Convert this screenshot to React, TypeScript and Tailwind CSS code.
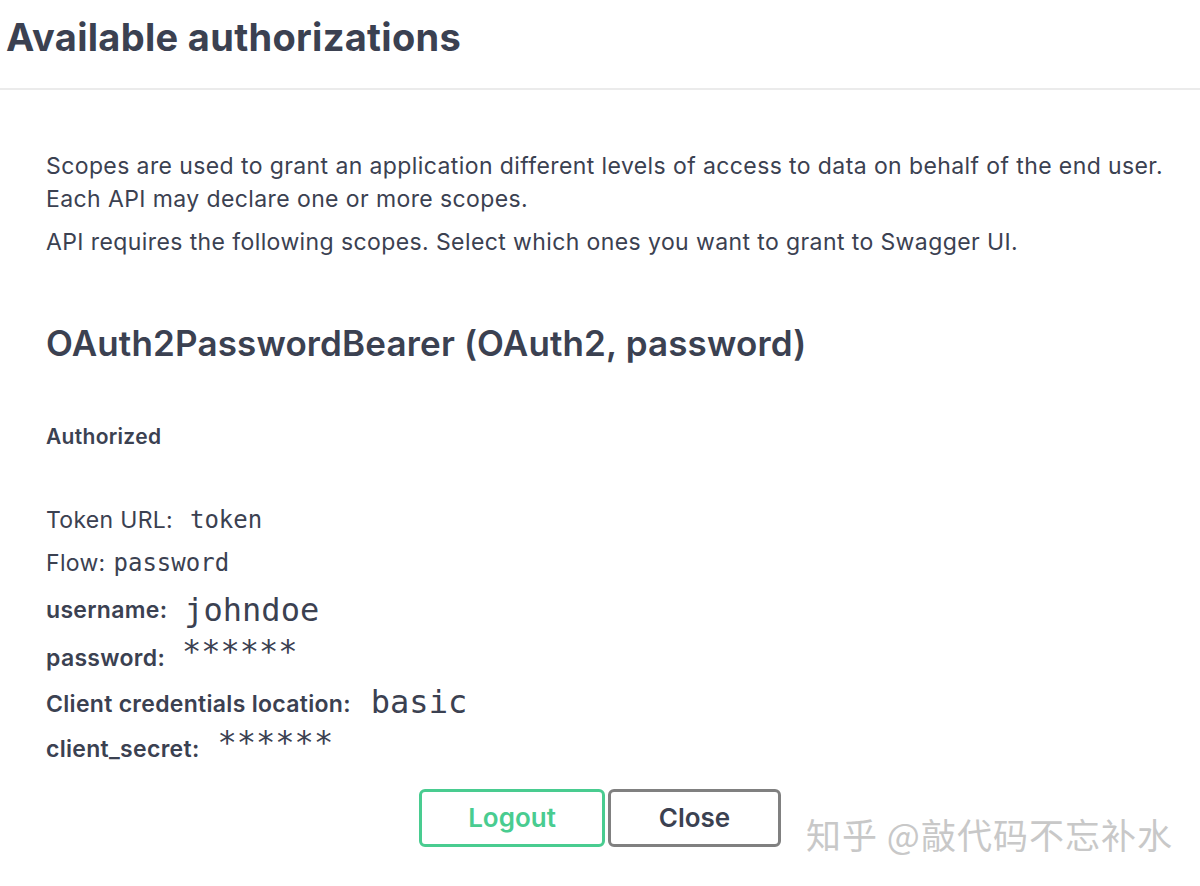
const sans = "font-['Inter','Liberation_Sans',sans-serif]";
const mono = "font-['DejaVu_Sans_Mono',monospace]";

const App = () => {
    return (
        <div className={`w-[1200px] h-[886px] bg-white text-[#3b4151] ${sans} overflow-hidden`}>
            <div className="h-[90px] border-b-2 border-[#ebebeb] flex items-center pl-[6px] pb-[14px]">
                <h2 className="text-[38px] font-bold leading-none tracking-[0.3px]">Available authorizations</h2>
            </div>

            <div className="pl-[46px] pr-[10px] pt-[60px]">
                <p className="text-[23px] leading-[33px] tracking-[0.4px] whitespace-nowrap">
                    Scopes are used to grant an application different levels of access to data on behalf of the end user.
                    <br />
                    Each API may declare one or more scopes.
                </p>
                <p className="text-[23px] leading-[33px] mt-[10px] tracking-[0.4px]">
                    API requires the following scopes. Select which ones you want to grant to Swagger UI.
                </p>

                <h4 className="text-[35px] font-semibold leading-none mt-[67px] tracking-[0.15px]">
                    OAuth2PasswordBearer (OAuth2, password)
                </h4>

                <h6 className="text-[21px] font-semibold mt-[60px] tracking-[0.3px]">Authorized</h6>

                <div className="mt-[46px] flex flex-col">
                    <p className="text-[23px] h-[43px] flex items-center tracking-[0.3px]">
                        Token URL:<code className={`${mono} text-[24px] ml-[17px] tracking-normal`}>token</code>
                    </p>
                    <p className="text-[23px] h-[43px] flex items-center tracking-[0.3px]">
                        Flow:<code className={`${mono} text-[24px] ml-[8px] tracking-normal`}>password</code>
                    </p>
                    <div className="h-[51px] flex items-center gap-[17px]">
                        <label className="text-[23px] font-semibold tracking-[0.3px]">username:</label>
                        <code className={`${mono} text-[32px]`}>johndoe</code>
                    </div>
                    <div className="h-[46px] flex items-center gap-[17px]">
                        <label className="text-[23px] font-semibold tracking-[0.3px]">password:</label>
                        <code className={`${mono} text-[32px] -mt-[16px]`}>******</code>
                    </div>
                    <div className="h-[46px] flex items-center gap-[20px]">
                        <label className="text-[23px] font-semibold tracking-[0.3px]">Client credentials location:</label>
                        <code className={`${mono} text-[32px] -mt-[6px]`}>basic</code>
                    </div>
                    <div className="h-[44px] flex items-center gap-[18px]">
                        <label className="text-[23px] font-semibold tracking-[0.3px]">client_secret:</label>
                        <code className={`${mono} text-[32px] -mt-[16px]`}>******</code>
                    </div>
                </div>
            </div>

            <div className="relative mt-[17px] flex justify-center">
                <div className="flex gap-[3px]">
                    <button className="w-[186px] h-[58px] rounded-[6px] border-[3px] border-[#49cc90] text-[#49cc90] text-[26px] font-semibold">
                        Logout
                    </button>
                    <button className="w-[173px] h-[58px] rounded-[6px] border-[3px] border-[#808080] text-[#3b4151] text-[26px] font-semibold">
                        Close
                    </button>
                </div>
                <span className="absolute left-[806px] top-[27px] text-[35px] leading-none text-[#c8c8c8] font-['Noto_Sans_CJK_SC',sans-serif] tracking-[1px] [text-shadow:1px_1px_0_#ffffff]">
                    知乎 @敲代码不忘补水
                </span>
            </div>
        </div>
    );
};

export default App;
